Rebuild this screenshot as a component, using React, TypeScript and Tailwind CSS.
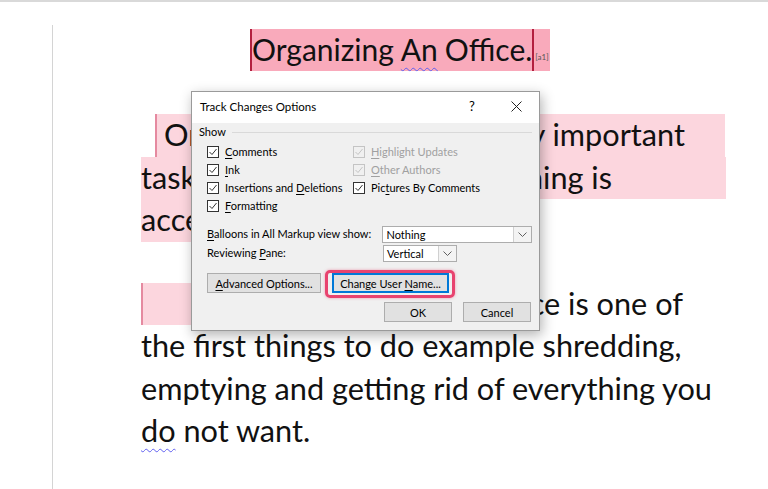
import React from "react";

const pinkLine = "bg-[#fcd6de]";

const Check = ({ disabled }: { disabled?: boolean }) => (
    <span
        className={`flex h-[12px] w-[12px] shrink-0 items-center justify-center border ${
            disabled ? "border-[#c4c4c4] bg-[#f0f0f0]" : "border-[#333333] bg-white"
        }`}
    >
        <svg width="10" height="10" viewBox="0 0 10 10">
            <path
                d="M1.5 5 L4 7.5 L8.5 2"
                fill="none"
                stroke={disabled ? "#c4c4c4" : "#333333"}
                strokeWidth="1"
            />
        </svg>
    </span>
);

const Key = ({ children }: { children: React.ReactNode }) => (
    <span className="underline underline-offset-2">{children}</span>
);

const CheckRow = ({ label, disabled }: { label: React.ReactNode; disabled?: boolean }) => (
    <div className="flex h-[18px] items-center gap-[6px]">
        <Check disabled={disabled} />
        <span className={disabled ? "text-[#a0a0a0]" : "text-black"}>{label}</span>
    </div>
);

const Chevron = () => (
    <svg width="9" height="6" viewBox="0 0 9 6">
        <path d="M0.5 0.5 L4.5 4.5 L8.5 0.5" fill="none" stroke="#606060" strokeWidth="1" />
    </svg>
);

const Select = ({ value, width }: { value: string; width: string }) => (
    <div className={`flex h-[17px] ${width} items-stretch border border-[#adadad] bg-white`}>
        <span className="flex flex-1 items-center pl-[3px] leading-none">{value}</span>
        <span className="flex w-[18px] items-center justify-center border-l border-[#d0d0d0] bg-[#f3f3f3]">
            <Chevron />
        </span>
    </div>
);

const Button = ({ children, className = "" }: { children: React.ReactNode; className?: string }) => (
    <div className={`relative flex h-[20px] items-center justify-center border bg-[#e1e1e1] leading-none ${className}`}>
        <span>{children}</span>
    </div>
);

const TrackChangesDialog = () => (
    <div className="absolute left-[191px] top-[89px] h-[240px] w-[349px] border border-[#9a9a9a] bg-[#f0f0f0] font-['Lato',sans-serif] text-[11px] text-black shadow-[2px_4px_12px_rgba(0,0,0,0.3)]">
        <div className="flex h-[31px] items-center bg-white pb-[2px] pl-[8px]">
            <span className="flex-1 text-[11.5px]">Track Changes Options</span>
            <span className="w-[20px] text-center text-[13px]">?</span>
            <span className="ml-[24px] flex w-[20px] justify-center">
                <svg width="11" height="11" viewBox="0 0 11 11">
                    <path d="M0.5 0.5 L10.5 10.5 M10.5 0.5 L0.5 10.5" stroke="#222" strokeWidth="1" />
                </svg>
            </span>
            <span className="w-[13px]" />
        </div>
        <div className="px-[7px]">
            <div className="flex h-[18px] items-center gap-[6px]">
                <span>Show</span>
                <span className="h-px flex-1 bg-[#d9d9d9]" />
            </div>
            <div className="flex pl-[8px] pt-[2px]">
                <div className="w-[146px]">
                    <CheckRow label={<><Key>C</Key>omments</>} />
                    <CheckRow label={<><Key>I</Key>nk</>} />
                    <CheckRow label={<>Insertions and <Key>D</Key>eletions</>} />
                    <CheckRow label={<><Key>F</Key>ormatting</>} />
                </div>
                <div>
                    <CheckRow disabled label={<><Key>H</Key>ighlight Updates</>} />
                    <CheckRow disabled label={<><Key>O</Key>ther Authors</>} />
                    <CheckRow label={<>Pic<Key>t</Key>ures By Comments</>} />
                </div>
            </div>
            <div className="mt-[11px] flex items-center pl-[8px]">
                <span className="w-[176px]"><Key>B</Key>alloons in All Markup view show:</span>
                <Select value="Nothing" width="w-[150px]" />
            </div>
            <div className="mt-[2px] flex items-center pl-[8px]">
                <span className="w-[176px]">Reviewing <Key>P</Key>ane:</span>
                <Select value="Vertical" width="w-[74px]" />
            </div>
            <div className="mt-[11px] flex items-center gap-[11px] pl-[8px]">
                <Button className="w-[114px] border-[#adadad]"><Key>A</Key>dvanced Options...</Button>
                <Button className="w-[117px] border-[#0078d7] shadow-[inset_0_0_0_1px_#0078d7]">
                    Change User <Key>N</Key>ame...
                    {/* highlight ring drawn over the button */}
                    <span className="pointer-events-none absolute -bottom-[6px] -left-[8px] -right-[7px] -top-[4px] rounded-[5px] border-[3px] border-[#e8436f] shadow-[0_0_3px_rgba(232,67,111,0.5)]" />
                </Button>
            </div>
            <div className="mt-[9px] flex justify-end gap-[11px] pr-[1px]">
                <Button className="w-[68px] border-[#adadad]">OK</Button>
                <Button className="w-[68px] border-[#adadad]">Cancel</Button>
            </div>
        </div>
    </div>
);

export default function App() {
    return (
        <div className="relative h-[489px] w-[768px] overflow-hidden border-t-2 border-[#d9d9d9] bg-white">
            <div className="flex h-full">
                <div className="w-[52px] shrink-0" />
                <div className="mt-[23px] flex-1 border-l border-[#d4d4d4] pl-[88px] font-['Lato',sans-serif] text-[30.7px] text-[#111]">
                    {/* title */}
                    <div className="ml-[109px] mt-[4px] flex h-[42px] items-stretch text-[30px]">
                        <span className="flex items-center border-l-2 border-[#b3203f] bg-[#f9aabb] pb-[3px] leading-none">
                            Organizing{" "}
                            <span className="mx-[7px] underline decoration-wavy decoration-[#6060f0] decoration-1 underline-offset-[6px]">
                                An
                            </span>
                            Office.
                        </span>
                        <span className="w-[2px] bg-[#b3203f]" />
                        <span className="flex items-end bg-[#f9aabb] pb-[10px] pl-px pr-[1px] text-[8px] leading-none text-[#555]">
                            [a1]
                        </span>
                    </div>

                    {/* paragraph 1 */}
                    <div className="mt-[43px] leading-[42.5px]">
                        <div className={`ml-[14px] h-[42.5px] w-[570px] border-l-2 border-[#e58aa0] pl-[7px] ${pinkLine}`}>
                            <div className="flex w-[521px] justify-between whitespace-nowrap">
                                <span>Organizing an office</span>
                                <span>is a very important</span>
                            </div>
                        </div>
                        <div className={`h-[42.5px] w-[585px] ${pinkLine}`}>
                            <div className="flex w-[471px] justify-between whitespace-nowrap">
                                <span>task to</span>
                                <span>ensure everything is</span>
                            </div>
                        </div>
                        <div className={`h-[42.5px] w-[250px] ${pinkLine}`}>accessible.</div>
                    </div>

                    {/* paragraph 2 */}
                    <div className="mt-[41px] leading-[42.5px]">
                        <div className="flex h-[42.5px]">
                            <span className={`h-[42.5px] w-[220px] shrink-0 border-l-2 border-[#e58aa0] ${pinkLine}`} />
                            <span className="-ml-[220px] w-[542px] shrink-0 whitespace-nowrap text-right">
                                Cleaning out the office is one of
                            </span>
                        </div>
                        <div className="whitespace-nowrap">the first things to do example shredding,</div>
                        <div className="whitespace-nowrap">emptying and getting rid of everything you</div>
                        <div>
                            <span className="underline decoration-wavy decoration-[#6060f0] decoration-1 underline-offset-[6px]">
                                do
                            </span>{" "}
                            not want.
                        </div>
                    </div>
                </div>
            </div>
            <TrackChangesDialog />
        </div>
    );
}
